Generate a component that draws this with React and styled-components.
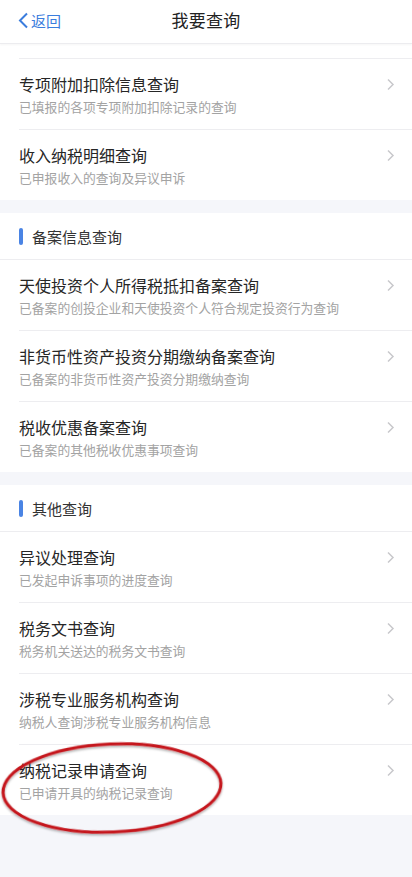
import React from "react";
import styled, { createGlobalStyle } from "styled-components";

const GlobalStyle = createGlobalStyle`
  *, *::before, *::after { box-sizing: border-box; }
  html, body {
    margin: 0;
    padding: 0;
    background: #f5f6fa;
    font-family: "Noto Sans CJK SC", "Noto Sans", sans-serif;
  }
`;

const Page = styled.div`
  position: relative;
  width: 412px;
  min-height: 877px;
  background: #f5f6fa;
  overflow: hidden;
`;

const Header = styled.div`
  height: 44px;
  display: flex;
  align-items: center;
  justify-content: center;
  position: relative;
  background: #fff;
  border-bottom: 1px solid #ececef;
  box-shadow: 0 1px 2px rgba(0, 0, 0, 0.04);
`;

const Back = styled.div`
  position: absolute;
  left: 17px;
  top: 0;
  height: 40px;
  display: flex;
  align-items: center;
  gap: 2px;
  color: #3b7ddd;
  font-size: 15px;
`;

const HeaderTitle = styled.div`
  font-size: 17px;
  color: #222;
  letter-spacing: 0.3px;
  margin-top: -5px;
`;

const Section = styled.div`
  background: #fff;
  margin-bottom: 13px;
`;

const Clipped = styled.div`
  height: 14px;
`;

const SectionHead = styled.div`
  height: 47px;
  display: flex;
  align-items: center;
  padding-left: 19px;
  border-bottom: 1px solid #ededf0;
  font-size: 15px;
  color: #333;
`;

const Bar = styled.span`
  width: 4px;
  height: 17px;
  border-radius: 2px;
  background: #4a84e4;
  margin-right: 9px;
`;

const Item = styled.div`
  display: flex;
  margin-left: 19px;
  padding: 14px 17px 12px 0;
  border-top: ${(p) => (p.$first ? "none" : "1px solid #ededf0")};
`;

const Texts = styled.div`
  flex: 1;
  display: flex;
  flex-direction: column;
`;

const Title = styled.div`
  font-size: 16px;
  line-height: 22px;
  color: #262626;
`;

const Sub = styled.div`
  margin-top: 2px;
  font-size: 12.8px;
  line-height: 20px;
  color: #a3a3a3;
`;

const Chevron = styled.svg`
  margin-top: 5px;
  flex: none;
`;

const Mark = styled.svg`
  position: absolute;
  left: 0;
  top: 736px;
  overflow: visible;
`;

const Arrow = () => (
  <Chevron width="9" height="13" viewBox="0 0 9 13">
    <path d="M2 1.5 L7 6.5 L2 11.5" fill="none" stroke="#c8c8cc" strokeWidth="1.5" />
  </Chevron>
);

const Row = ({ title, sub, first }) => (
  <Item $first={first}>
    <Texts>
      <Title>{title}</Title>
      <Sub>{sub}</Sub>
    </Texts>
    <Arrow />
  </Item>
);

export default function App() {
  return (
    <Page>
      <GlobalStyle />
      <Header>
        <Back>
          <svg width="12" height="17" viewBox="0 0 12 17">
            <path d="M10 1.5 L3 8.5 L10 15.5" fill="none" stroke="#3b7ddd" strokeWidth="2" />
          </svg>
          <span>返回</span>
        </Back>
        <HeaderTitle>我要查询</HeaderTitle>
      </Header>

      <Section>
        <Clipped />
        <Row title="专项附加扣除信息查询" sub="已填报的各项专项附加扣除记录的查询" />
        <Row title="收入纳税明细查询" sub="已申报收入的查询及异议申诉" />
      </Section>

      <Section>
        <SectionHead>
          <Bar />
          备案信息查询
        </SectionHead>
        <Row first title="天使投资个人所得税抵扣备案查询" sub="已备案的创投企业和天使投资个人符合规定投资行为查询" />
        <Row title="非货币性资产投资分期缴纳备案查询" sub="已备案的非货币性资产投资分期缴纳查询" />
        <Row title="税收优惠备案查询" sub="已备案的其他税收优惠事项查询" />
      </Section>

      <Section>
        <SectionHead>
          <Bar />
          其他查询
        </SectionHead>
        <Row first title="异议处理查询" sub="已发起申诉事项的进度查询" />
        <Row title="税务文书查询" sub="税务机关送达的税务文书查询" />
        <Row title="涉税专业服务机构查询" sub="纳税人查询涉税专业服务机构信息" />
        <Row title="纳税记录申请查询" sub="已申请开具的纳税记录查询" />
      </Section>

      <Mark width="230" height="104" viewBox="0 0 230 104">
        <defs>
          <filter id="sh" x="-10%" y="-20%" width="120%" height="140%">
            <feDropShadow dx="0" dy="1.5" stdDeviation="1.2" floodColor="#000" floodOpacity="0.35" />
          </filter>
        </defs>
        <ellipse
          cx="112"
          cy="52"
          rx="109"
          ry="44"
          transform="rotate(-2.5 112 52)"
          fill="none"
          stroke="#c5161c"
          strokeWidth="3"
          filter="url(#sh)"
        />
      </Mark>
    </Page>
  );
}
